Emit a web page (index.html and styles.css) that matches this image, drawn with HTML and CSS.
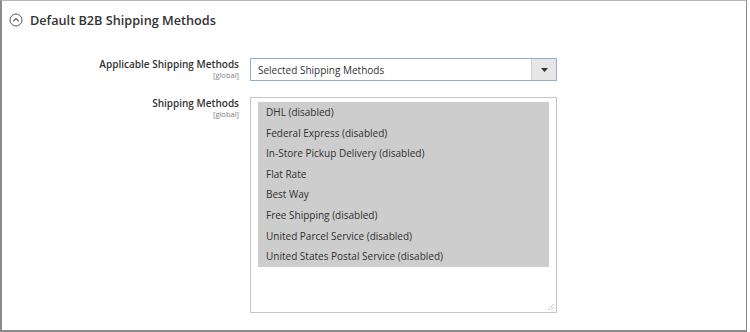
FILE: index.html
```html
<!DOCTYPE html>
<html>
<head>
<meta charset="utf-8">
<link rel="stylesheet" href="styles.css">
</head>
<body>
<div class="frame">
  <div class="section-title">
    <svg class="toggle" width="14" height="14" viewBox="0 0 14 14">
      <circle cx="7" cy="7" r="6" fill="none" stroke="#555" stroke-width="1"/>
      <path d="M4.2 8.4 L7 5.6 L9.8 8.4" fill="none" stroke="#555" stroke-width="1.1"/>
    </svg>
    <span>Default B2B Shipping Methods</span>
  </div>
  <div class="rows">
    <div class="row">
      <div class="label">
        <div class="label-text">Applicable Shipping Methods</div>
        <div class="scope">[global]</div>
      </div>
      <div class="control">
        <div class="select">
          <span class="select-value">Selected Shipping Methods</span>
          <span class="select-arrow"><svg width="7" height="4" viewBox="0 0 7 4"><path d="M0 0 H7 L3.5 4 Z" fill="#333"/></svg></span>
        </div>
      </div>
    </div>
    <div class="row">
      <div class="label">
        <div class="label-text">Shipping Methods</div>
        <div class="scope">[global]</div>
      </div>
      <div class="control">
        <div class="multiselect">
          <div class="options">
            <div class="option">DHL (disabled)</div>
            <div class="option">Federal Express (disabled)</div>
            <div class="option">In-Store Pickup Delivery (disabled)</div>
            <div class="option">Flat Rate</div>
            <div class="option">Best Way</div>
            <div class="option">Free Shipping (disabled)</div>
            <div class="option">United Parcel Service (disabled)</div>
            <div class="option">United States Postal Service (disabled)</div>
          </div>
          <svg class="resize" width="8" height="8" viewBox="0 0 8 8"><path d="M1 7 L7 1 M4 7 L7 4" stroke="#bbb" stroke-width="0.8"/></svg>
        </div>
      </div>
    </div>
  </div>
</div>
</body>
</html>
```
FILE: styles.css
```css
html, body {
  margin: 0;
  padding: 0;
  background: #fff;
}
body {
  font-family: "Open Sans", "Liberation Sans", sans-serif;
  color: #333;
}
.frame {
  box-sizing: border-box;
  width: 747px;
  height: 332px;
  border: 1px solid #8a8a8a;
  border-left-width: 2px;
  border-bottom-width: 2px;
  border-top-color: #b5b5b5;
  position: relative;
}
.section-title {
  display: flex;
  align-items: center;
  gap: 7px;
  padding: 11px 0 0 7px;
  height: 16px;
  font-size: 12.7px;
  font-weight: 600;
  color: #333;
}
.toggle {
  flex: none;
}
.rows {
  display: flex;
  flex-direction: column;
  gap: 16px;
  padding-top: 30px;
}
.row {
  display: flex;
  align-items: flex-start;
}
.label {
  width: 237px;
  flex: none;
  text-align: right;
  padding-top: 0;
}
.label-text {
  font-size: 10px;
  font-weight: 600;
  line-height: 13px;
  color: #333;
}
.scope {
  font-size: 7.5px;
  color: #808080;
  line-height: 9px;
}
.control {
  margin-left: 11px;
}
.select {
  box-sizing: border-box;
  width: 307px;
  height: 23px;
  border: 1px solid #8fb0d6;
  display: flex;
  align-items: stretch;
  font-size: 10px;
}
.select-value {
  flex: 1;
  display: flex;
  align-items: center;
  padding-left: 7px;
  color: #333;
}
.select-arrow {
  width: 24px;
  flex: none;
  background: #e6e6e6;
  border-left: 1px solid #cfcfcf;
  display: flex;
  align-items: center;
  justify-content: center;
}
.multiselect {
  box-sizing: border-box;
  width: 307px;
  height: 216px;
  border: 1px solid #c6c6c6;
  padding: 4px 7px 0 7px;
  position: relative;
}
.options {
  background: #cdcdcd;
}
.option {
  height: 20.6px;
  line-height: 20.6px;
  padding-left: 8px;
  font-size: 10px;
  color: #303030;
  white-space: nowrap;
}
.resize {
  position: absolute;
  right: 1px;
  bottom: 1px;
}
```
